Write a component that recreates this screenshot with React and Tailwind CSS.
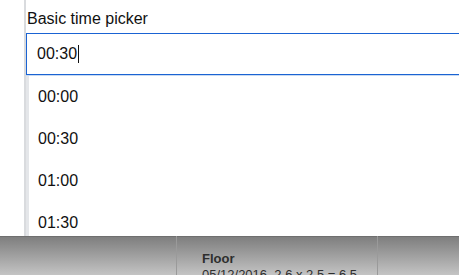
import React from 'react';

const times = ['00:00', '00:30', '01:00', '01:30', '02:00'];

export default function App() {
  return (
    <div
      className="w-[459px] h-[275px] overflow-hidden bg-white flex flex-col"
      style={{ fontFamily: '"Liberation Sans", Arial, sans-serif' }}
    >
      {/* main page area */}
      <div className="relative h-[236px] flex shrink-0">
        <div className="w-[24px] shrink-0" />
        <div className="w-[2px] shrink-0 bg-[#d9dbde]" />
        <div className="flex-1 flex flex-col">
          <label className="block pl-[1px] pt-[9px] text-[16px] leading-[20px] text-[#111]">
            Basic time picker
          </label>
          <div className="mt-[4px] h-[42px] w-[440px] border border-[#1a63d3] shadow-[0_2px_0_#c8daf2] flex items-center pl-[10px]">
            <span className="text-[16px] text-[#111]">00:30</span>
            <span className="ml-[1px] w-[1px] h-[18px] bg-[#111]" />
          </div>
        </div>

        {/* dropdown list */}
        <ul className="absolute left-[26px] top-[76px] right-0 bottom-0 overflow-hidden bg-white border-l-[3px] border-[#e4e6e9]">
          {times.map((t) => (
            <li key={t} className="h-[42px] flex items-center pl-[9px] text-[16px] text-[#111]">
              {t}
            </li>
          ))}
        </ul>
      </div>

      {/* bottom toolbar */}
      <div className="flex-1 flex overflow-hidden bg-gradient-to-b from-[#7d7d7d] to-[#c4c4c4] shadow-[inset_0_1px_0_#6f6f6f]">
        <div className="w-[177px] shrink-0 border-r border-[#9a9a9a]" />
        <div className="w-[201px] shrink-0 border-r border-[#9a9a9a] pl-[25px] pt-[15px] text-[13px] leading-[16px] text-[#2e2e2e]">
          <div className="font-bold">Floor</div>
          <div className="whitespace-nowrap">05/12/2016&nbsp;&nbsp;2.6 x 2.5 = 6.5</div>
        </div>
        <div className="flex-1" />
      </div>
    </div>
  );
}
